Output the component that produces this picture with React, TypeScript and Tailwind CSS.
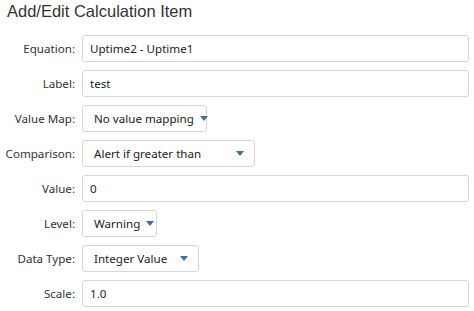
import React from "react";

const Caret = () => (
  <svg width="8" height="5" viewBox="0 0 8 5" className="shrink-0 ml-[6px]">
    <path d="M0 0 L8 0 L4 5 Z" fill="#3d6f9e" />
  </svg>
);

const Row = ({ label, children }: { label: string; children: React.ReactNode }) => (
  <div className="flex items-center h-[27px]">
    <div className="w-[75px] text-right text-[11.6px] text-[#333] whitespace-nowrap">{label}</div>
    {children}
  </div>
);

const TextInput = ({ value }: { value: string }) => (
  <div className="ml-[7px] w-[387px] h-[27px] border border-[#d6d6d6] rounded-[3px] bg-white flex items-center px-[7px] text-[11.6px] text-[#222]">
    {value}
  </div>
);

const Select = ({ value, width }: { value: string; width: string }) => (
  <div
    className={`ml-[7px] ${width} h-[27px] border border-[#d6d6d6] rounded-[3px] bg-white flex items-center justify-between pl-[11px] pr-[10px] text-[11.6px] text-[#222] whitespace-nowrap`}
  >
    <span>{value}</span>
    <Caret />
  </div>
);

export default function App() {
  return (
    <div className="w-[474px] h-[311px] bg-white overflow-hidden" style={{ fontFamily: "'Noto Sans', sans-serif" }}>
      <div className="pl-[7px] pt-[1px] text-[16.5px] text-[#333] leading-[20px]" style={{ fontFamily: "'Liberation Sans', Arial, sans-serif" }}>
        Add/Edit Calculation Item
      </div>
      <div className="mt-[14px] flex flex-col gap-[8px]">
        <Row label="Equation:">
          <TextInput value="Uptime2 - Uptime1" />
        </Row>
        <Row label="Label:">
          <TextInput value="test" />
        </Row>
        <Row label="Value Map:">
          <Select value="No value mapping" width="w-[125px]" />
        </Row>
        <Row label="Comparison:">
          <Select value="Alert if greater than" width="w-[173px]" />
        </Row>
        <Row label="Value:">
          <TextInput value="0" />
        </Row>
        <Row label="Level:">
          <Select value="Warning" width="w-[75px]" />
        </Row>
        <Row label="Data Type:">
          <Select value="Integer Value" width="w-[117px]" />
        </Row>
        <Row label="Scale:">
          <TextInput value="1.0" />
        </Row>
      </div>
    </div>
  );
}
